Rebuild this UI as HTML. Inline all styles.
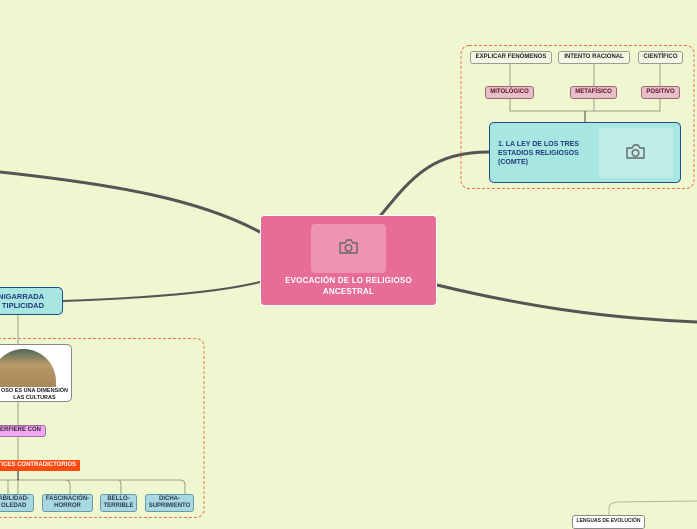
<!DOCTYPE html>
<html><head><meta charset="utf-8"><style>
body{margin:0;width:697px;height:520px;background:#eef7cf;overflow:hidden;position:relative;font-family:"Liberation Sans",sans-serif;font-weight:bold}
.a{position:absolute;box-sizing:border-box;display:flex;align-items:center;justify-content:center;text-align:center;line-height:1.2}
.s{font-size:6px;color:#222;border-radius:3px}
.g{background:#f4f8e4;border:1px solid #999c88}
.p{background:#e8bfc8;border:1px solid #9a6a74;color:#5a1020}
.c{background:#a8d8e0;border:1px solid #6a98a8;color:#2a3a50}
</style></head><body>
<svg width="697" height="520" style="position:absolute;left:0;top:0">
<g fill="none" stroke="#555" stroke-linecap="round">
<path d="M381 215 C410 180,430 152,489 152" stroke-width="3"/>
<path d="M0 172 C120 185,200 200,260 232" stroke-width="3"/>
<path d="M63 301 C150 298,220 292,260 282" stroke-width="2"/>
<path d="M437 285 C520 305,600 318,697 322" stroke-width="3"/>
</g>
<g fill="none" stroke="#9a9c88" stroke-width="1">
<path d="M510 64V86M594 64V86M660 64V86M510 99V111H660V99M594 99V111"/>
<path d="M18 315V344M18 402V425M18 437V460"/>
<path d="M18 471V494M0 480H180Q185 480 185 485V494M65 480Q70 480 70 485V494M118 480Q121 480 121 485V494M8 480V494"/>
<path d="M609 515V508Q609 502 620 502L697 501" stroke="#b0b898"/>
</g>
<path d="M585 111V122" stroke="#444"/>
<path d="M18 471V480" stroke="#222"/>
<rect x="461" y="45.5" width="233" height="143" rx="8" fill="none" stroke="#f07050" stroke-dasharray="3,2"/>
<rect x="-20" y="338.5" width="224" height="179" rx="8" fill="none" stroke="#f07050" stroke-dasharray="3,2"/>
<defs><g id="cam" fill="none" stroke="#666" stroke-width="1.4"><path d="M1 5H6L8 2H12L14 5H18V15H1Z" stroke-linejoin="round"/><circle cx="9.5" cy="10" r="3.3"/></g></defs>
<use href="#cam" x="625" y="143"/>
<use href="#cam" x="339" y="238"/>
</svg>
<div class="a s g" style="left:470px;top:51px;width:82px;height:13px">EXPLICAR FENÓMENOS</div>
<div class="a s g" style="left:558px;top:51px;width:72px;height:13px">INTENTO RACIONAL</div>
<div class="a s g" style="left:638px;top:51px;width:45px;height:13px">CIENTÍFICO</div>
<div class="a s p" style="left:485px;top:86px;width:49px;height:13px">MITOLÓGICO</div>
<div class="a s p" style="left:570px;top:86px;width:47px;height:13px">METAFÍSICO</div>
<div class="a s p" style="left:641px;top:86px;width:39px;height:13px">POSITIVO</div>
<div class="a" style="left:489px;top:122px;width:192px;height:61px;background:#a8e6e2;border:1px solid #1f4e8c;border-radius:5px;justify-content:flex-start">
<div style="position:absolute;left:8px;top:17px;font-size:7px;color:#1f3e7c;text-align:left;line-height:1.3">1. LA LEY DE LOS TRES<br>ESTADIOS RELIGIOSOS<br>(COMTE)</div>
<div style="position:absolute;left:109px;top:5px;width:74px;height:50px;background:#bfeeea;border-radius:3px"></div></div>
<div class="a" style="left:260px;top:215px;width:177px;height:91px;background:#e86c98;border:1.5px solid #fff;border-radius:4px">
<div style="position:absolute;left:50px;top:8px;width:75px;height:49px;background:#ee93b4;border-radius:4px"></div>
<div style="position:absolute;left:0;right:0;top:60px;font-size:8px;color:#fff;line-height:1.35;letter-spacing:0.2px">EVOCACIÓN DE LO RELIGIOSO<br>ANCESTRAL</div></div>
<svg width="697" height="520" style="position:absolute;left:0;top:0;pointer-events:none">
<g fill="none" stroke="#666" stroke-width="1.4"><path d="M627 148H632L634 145H638L640 148H644V158H627Z" stroke-linejoin="round"/><circle cx="635.5" cy="153" r="3.3"/>
<path d="M340 243H345L347 240H351L353 243H357V253H340Z" stroke-linejoin="round"/><circle cx="348.5" cy="248" r="3.3"/></g></svg>
<div class="a" style="left:-40px;top:287px;width:103px;height:28px;background:#a8e6e2;border:1px solid #1f4e8c;border-radius:5px;font-size:7.5px;color:#1f3e7c;text-align:right;justify-content:flex-end;padding-right:18px">NIGARRADA<br>TIPLICIDAD</div>
<div class="a" style="left:-40px;top:344px;width:112px;height:58px;background:#fff;border:1px solid #888;border-radius:5px">
<div style="position:absolute;left:30px;top:4px;width:65px;height:38px;border-radius:33px 33px 0 0;background:linear-gradient(#4a6858,#b89868 40%,#a88858)"></div>
<div style="position:absolute;right:3px;top:43px;font-size:5.5px;color:#222;line-height:1.3">OSO ES UNA DIMENSIÓN<br>LAS CULTURAS</div></div>
<div class="a s" style="left:-20px;top:425px;width:66px;height:12px;background:#f0a8f0;border:1px solid #a070a0;justify-content:flex-end;padding-right:4px;color:#402040">INTERFIERE CON</div>
<div class="a s" style="left:-20px;top:460px;width:100px;height:11px;background:#ff4a10;color:#fff;justify-content:flex-end;padding-right:4px;border-radius:1px">ATICES CONTRADICTORIOS</div>
<div class="a s c" style="left:-20px;top:494px;width:54px;height:18px;justify-content:flex-end;padding-right:4px">ABILIDAD-<br>OLEDAD</div>
<div class="a s c" style="left:42px;top:494px;width:51px;height:18px">FASCINACIÓN-<br>HORROR</div>
<div class="a s c" style="left:100px;top:494px;width:37px;height:18px">BELLO-<br>TERRIBLE</div>
<div class="a s c" style="left:145px;top:494px;width:49px;height:18px">DICHA-<br>SUPRIMIENTO</div>
<div class="a s" style="left:572px;top:515px;width:73px;height:14px;background:#fff;border:1px solid #888;align-items:flex-start;padding-top:2px;font-size:5px">LENGUAS DE EVOLUCIÓN</div>
</body></html>
